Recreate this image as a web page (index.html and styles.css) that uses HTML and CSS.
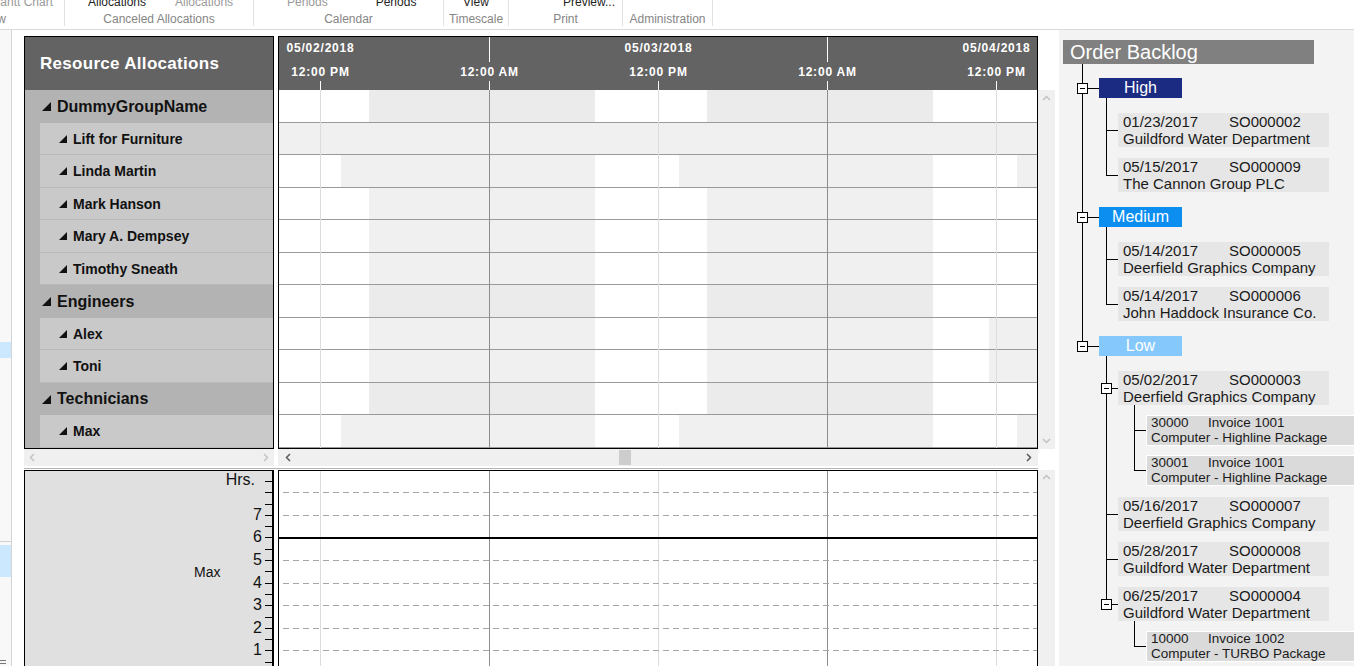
FILE: index.html
```html
<!DOCTYPE html>
<html>
  <head>
    <title>Resource Planning</title>
    <link rel="stylesheet" href="styles.css">
  </head>
  <body>
    <div class="ribbon">
      <div class="rgroup g1">
        <div class="rbtns"><span class="off">Gantt Chart</span></div>
        <div class="rlabel">View</div>
      </div>
      <div class="rgroup g2">
        <div class="rbtns"><span>Allocations</span><span class="off">Allocations</span></div>
        <div class="rlabel">Canceled Allocations</div>
      </div>
      <div class="rgroup g3">
        <div class="rbtns"><span class="off">Periods</span><span>Periods</span></div>
        <div class="rlabel">Calendar</div>
      </div>
      <div class="rgroup g4">
        <div class="rbtns"><span>View</span></div>
        <div class="rlabel">Timescale</div>
      </div>
      <div class="rgroup g5">
        <div class="rbtns"><span>Preview...</span></div>
        <div class="rlabel">Print</div>
      </div>
      <div class="rgroup g6">
        <div class="rbtns"></div>
        <div class="rlabel">Administration</div>
      </div>
    </div>

    <div class="work">
      <div class="nav">
        <div class="nav-sel"></div>
        <div class="nav-rule"></div>
        <div class="nav-sel tall"></div>
        <div class="nav-grip"><i></i><i></i></div>
      </div>

      <div class="plan">
        <div class="upper">
          <div class="restable">
            <div class="rhead">Resource Allocations</div>
            <div class="rbody">
              <div class="rrow grp"><svg class="tri" width="9" height="9" viewBox="0 0 9 9"><path d="M9 0V9H0Z"/></svg>DummyGroupName</div>
              <div class="rrow kid"><svg class="tri" width="8" height="8" viewBox="0 0 8 8"><path d="M8 0V8H0Z"/></svg>Lift for Furniture</div>
              <div class="rrow kid"><svg class="tri" width="8" height="8" viewBox="0 0 8 8"><path d="M8 0V8H0Z"/></svg>Linda Martin</div>
              <div class="rrow kid"><svg class="tri" width="8" height="8" viewBox="0 0 8 8"><path d="M8 0V8H0Z"/></svg>Mark Hanson</div>
              <div class="rrow kid"><svg class="tri" width="8" height="8" viewBox="0 0 8 8"><path d="M8 0V8H0Z"/></svg>Mary A. Dempsey</div>
              <div class="rrow kid"><svg class="tri" width="8" height="8" viewBox="0 0 8 8"><path d="M8 0V8H0Z"/></svg>Timothy Sneath</div>
              <div class="rrow grp"><svg class="tri" width="9" height="9" viewBox="0 0 9 9"><path d="M9 0V9H0Z"/></svg>Engineers</div>
              <div class="rrow kid"><svg class="tri" width="8" height="8" viewBox="0 0 8 8"><path d="M8 0V8H0Z"/></svg>Alex</div>
              <div class="rrow kid"><svg class="tri" width="8" height="8" viewBox="0 0 8 8"><path d="M8 0V8H0Z"/></svg>Toni</div>
              <div class="rrow grp"><svg class="tri" width="9" height="9" viewBox="0 0 9 9"><path d="M9 0V9H0Z"/></svg>Technicians</div>
              <div class="rrow kid"><svg class="tri" width="8" height="8" viewBox="0 0 8 8"><path d="M8 0V8H0Z"/></svg>Max</div>
            </div>
          </div>

          <div class="gantt">
            <div class="ghead">
              <div class="gdates">
                <div class="gdate">05/02/2018</div>
                <div class="gdate">05/03/2018</div>
                <div class="gdate">05/04/2018</div>
              </div>
              <div class="gtimes">
                <div class="gtime">12:00 PM</div>
                <div class="gtime">12:00 AM</div>
                <div class="gtime">12:00 PM</div>
                <div class="gtime">12:00 AM</div>
                <div class="gtime">12:00 PM</div>
              </div>
            </div>
            <div class="gbody">
              <!-- white = working time, grey = non-working time -->
              <div class="grow grp"><span style="width:90px"></span><span class="off" style="width:226px"></span><span style="width:112px"></span><span class="off" style="width:226px"></span><span></span></div>
              <div class="grow"><span class="off"></span></div>
              <div class="grow"><span style="width:62px"></span><span class="off" style="width:254px"></span><span style="width:84px"></span><span class="off" style="width:254px"></span><span style="width:84px"></span><span class="off"></span></div>
              <div class="grow"><span style="width:90px"></span><span class="off" style="width:226px"></span><span style="width:112px"></span><span class="off" style="width:226px"></span><span></span></div>
              <div class="grow"><span style="width:90px"></span><span class="off" style="width:226px"></span><span style="width:112px"></span><span class="off" style="width:226px"></span><span></span></div>
              <div class="grow"><span style="width:90px"></span><span class="off" style="width:226px"></span><span style="width:112px"></span><span class="off" style="width:226px"></span><span></span></div>
              <div class="grow grp"><span style="width:90px"></span><span class="off" style="width:226px"></span><span style="width:112px"></span><span class="off" style="width:226px"></span><span></span></div>
              <div class="grow"><span style="width:90px"></span><span class="off" style="width:226px"></span><span style="width:112px"></span><span class="off" style="width:226px"></span><span style="width:56px"></span><span class="off"></span></div>
              <div class="grow"><span style="width:90px"></span><span class="off" style="width:226px"></span><span style="width:112px"></span><span class="off" style="width:226px"></span><span style="width:56px"></span><span class="off"></span></div>
              <div class="grow grp"><span style="width:90px"></span><span class="off" style="width:226px"></span><span style="width:112px"></span><span class="off" style="width:226px"></span><span></span></div>
              <div class="grow"><span style="width:62px"></span><span class="off" style="width:254px"></span><span style="width:84px"></span><span class="off" style="width:254px"></span><span style="width:84px"></span><span class="off"></span></div>
              <div class="gridlines">
                <div class="vl" style="left:41px"></div>
                <div class="vl mid" style="left:210px"></div>
                <div class="vl" style="left:379px"></div>
                <div class="vl mid" style="left:548px"></div>
                <div class="vl" style="left:717px"></div>
              </div>
            </div>
          </div>

          <div class="vscroll">
            <svg width="9" height="6" viewBox="0 0 9 6"><polyline points="1,5 4.5,1.5 8,5"/></svg>
            <svg width="9" height="6" viewBox="0 0 9 6"><polyline points="1,1 4.5,4.5 8,1"/></svg>
          </div>
        </div>

        <div class="hrow">
          <div class="hscroll side">
            <svg width="6" height="9" viewBox="0 0 6 9"><polyline points="5,1 1.5,4.5 5,8"/></svg>
            <svg class="end" width="6" height="9" viewBox="0 0 6 9"><polyline points="1,1 4.5,4.5 1,8"/></svg>
          </div>
          <div class="hscroll main">
            <svg width="6" height="9" viewBox="0 0 6 9"><polyline points="5,1 1.5,4.5 5,8"/></svg>
            <div class="thumb"></div>
            <svg class="end" width="6" height="9" viewBox="0 0 6 9"><polyline points="1,1 4.5,4.5 1,8"/></svg>
          </div>
        </div>
        <div class="split"></div>

        <div class="lower">
          <div class="histaxis">
            <svg class="axis" width="248" height="200">
              <line x1="247.5" y1="0" x2="247.5" y2="200"/>
              <g class="ticks">
                <line x1="240" y1="10.5" x2="247" y2="10.5"/>
                <line x1="240" y1="21.5" x2="247" y2="21.5"/>
                <line x1="240" y1="33.5" x2="247" y2="33.5"/>
                <line x1="240" y1="44.5" x2="247" y2="44.5"/>
                <line x1="240" y1="55.5" x2="247" y2="55.5"/>
                <line x1="240" y1="66.5" x2="247" y2="66.5"/>
                <line x1="240" y1="78.5" x2="247" y2="78.5"/>
                <line x1="240" y1="89.5" x2="247" y2="89.5"/>
                <line x1="240" y1="100.5" x2="247" y2="100.5"/>
                <line x1="240" y1="112.5" x2="247" y2="112.5"/>
                <line x1="240" y1="123.5" x2="247" y2="123.5"/>
                <line x1="240" y1="134.5" x2="247" y2="134.5"/>
                <line x1="240" y1="146.5" x2="247" y2="146.5"/>
                <line x1="240" y1="157.5" x2="247" y2="157.5"/>
                <line x1="240" y1="168.5" x2="247" y2="168.5"/>
                <line x1="240" y1="179.5" x2="247" y2="179.5"/>
                <line x1="240" y1="191.5" x2="247" y2="191.5"/>
              </g>
              <text class="unit" x="230" y="14">Hrs.</text>
              <text class="num" x="237" y="49">7</text>
              <text class="num" x="237" y="71">6</text>
              <text class="num" x="237" y="94">5</text>
              <text class="num" x="237" y="117">4</text>
              <text class="num" x="237" y="139">3</text>
              <text class="num" x="237" y="162">2</text>
              <text class="num" x="237" y="184">1</text>
              <text class="res" x="169" y="105.5">Max</text>
            </svg>
          </div>
          <div class="histchart">
            <svg class="load" width="758" height="200">
              <line class="noon" x1="41.5" y1="0" x2="41.5" y2="200"/>
              <line class="midnight" x1="210.5" y1="0" x2="210.5" y2="200"/>
              <line class="noon" x1="379.5" y1="0" x2="379.5" y2="200"/>
              <line class="midnight" x1="548.5" y1="0" x2="548.5" y2="200"/>
              <line class="noon" x1="717.5" y1="0" x2="717.5" y2="200"/>
              <g class="hours">
                <line x1="4" y1="21.5" x2="758" y2="21.5"/>
                <line x1="4" y1="44.5" x2="758" y2="44.5"/>
                <line x1="4" y1="89.5" x2="758" y2="89.5"/>
                <line x1="4" y1="112.5" x2="758" y2="112.5"/>
                <line x1="4" y1="134.5" x2="758" y2="134.5"/>
                <line x1="4" y1="157.5" x2="758" y2="157.5"/>
                <line x1="4" y1="179.5" x2="758" y2="179.5"/>
              </g>
              <!-- capacity: 6 hrs -->
              <rect x="0" y="66" width="758" height="2"/>
            </svg>
          </div>
          <div class="vscroll hist">
            <svg width="9" height="6" viewBox="0 0 9 6"><polyline points="1,5 4.5,1.5 8,5"/></svg>
          </div>
        </div>
      </div>

      <div class="backlog">
        <div class="bl-title">Order Backlog</div>
        <div class="tree">
          <div class="prio">
            <div class="prio-head"><span class="exp"></span><span class="prio-label high">High</span></div>
            <div class="orders">
              <div class="order"><div class="card"><span class="dt">01/23/2017</span>SO000002<br>Guildford Water Department</div></div>
              <div class="order"><div class="card"><span class="dt">05/15/2017</span>SO000009<br>The Cannon Group PLC</div></div>
            </div>
          </div>
          <div class="prio">
            <div class="prio-head"><span class="exp"></span><span class="prio-label medium">Medium</span></div>
            <div class="orders">
              <div class="order"><div class="card"><span class="dt">05/14/2017</span>SO000005<br>Deerfield Graphics Company</div></div>
              <div class="order"><div class="card"><span class="dt">05/14/2017</span>SO000006<br>John Haddock Insurance Co.</div></div>
            </div>
          </div>
          <div class="prio">
            <div class="prio-head"><span class="exp"></span><span class="prio-label low">Low</span></div>
            <div class="orders">
              <div class="order">
                <div class="card"><span class="exp"></span><span class="dt">05/02/2017</span>SO000003<br>Deerfield Graphics Company</div>
                <div class="subs">
                  <div class="sub"><div class="subcard"><span class="num">30000</span>Invoice 1001<br>Computer - Highline Package</div></div>
                  <div class="sub"><div class="subcard"><span class="num">30001</span>Invoice 1001<br>Computer - Highline Package</div></div>
                </div>
              </div>
              <div class="order"><div class="card"><span class="dt">05/16/2017</span>SO000007<br>Deerfield Graphics Company</div></div>
              <div class="order"><div class="card"><span class="dt">05/28/2017</span>SO000008<br>Guildford Water Department</div></div>
              <div class="order">
                <div class="card"><span class="exp"></span><span class="dt">06/25/2017</span>SO000004<br>Guildford Water Department</div>
                <div class="subs">
                  <div class="sub"><div class="subcard"><span class="num">10000</span>Invoice 1002<br>Computer - TURBO Package</div></div>
                </div>
              </div>
            </div>
          </div>
        </div>
      </div>
    </div>
  </body>
</html>
```

FILE: styles.css
```css
*{
  box-sizing: border-box;
}

body{
  margin: 0;
  width: 1354px;
  height: 666px;
  overflow: hidden;
  background-color: white;
  color: #111;
  font-family: "Liberation Sans", Arial, Helvetica, sans-serif;
}

/* ribbon, scrolled so only the bottom of it shows */
.ribbon{
  display: flex;
  height: 30px;
  border-bottom: 1px solid #dadada;
  overflow: hidden;
  font-size: 12px;
}

.rgroup{
  display: flex;
  flex-direction: column;
  flex: none;
  height: 26px;
  border-right: 1px solid #e2e2e2;
}

.rbtns{
  display: flex;
  height: 17px;
  margin-top: -5px;
  line-height: 14px;
  color: #1e1e1e;
  white-space: nowrap;
}

.rbtns .off{
  color: #9a9a9a;
}

.rlabel{
  line-height: 14px;
  text-align: center;
  color: #858585;
  white-space: nowrap;
}

.g1{ width: 85px; margin-left: -20px; }
.g1 .rbtns{ padding-left: 11px; }
.g1 .rlabel{ text-align: left; }
.g2{ width: 189px; }
.g2 .rbtns{ padding-left: 23px; gap: 29px; }
.g3{ width: 190px; }
.g3 .rbtns{ padding-left: 33px; gap: 48px; }
.g4{ width: 65px; }
.g4 .rbtns{ padding-left: 19px; }
.g5{ width: 114px; }
.g5 .rbtns{ padding-left: 54px; }
.g6{ width: 90px; }

.work{
  display: flex;
  height: 636px;
}

/* collapsed navigation strip */
.nav{
  display: flex;
  flex-direction: column;
  flex: none;
  width: 12px;
  background-color: #f8f8f8;
  border-right: 1px solid #d4d4d4;
}

.nav-sel{
  height: 16px;
  margin-top: 312px;
  background-color: #cce8ff;
}

.nav-sel.tall{
  height: 32px;
  margin-top: 3px;
}

.nav-rule{
  height: 1px;
  margin-top: 183px;
  background-color: #d0d0d0;
}

.nav-grip{
  margin-top: auto;
  padding-bottom: 2px;
}

.nav-grip i{
  display: block;
  width: 6px;
  height: 1px;
  margin-top: 2px;
  background-color: #777;
}

.plan{
  display: flex;
  flex-direction: column;
  flex: none;
  width: 1031px;
  margin-left: 12px;
  padding-top: 6px;
}

.plan > *{
  flex: none;
}

.upper{
  display: flex;
  height: 413px;
}

/* resource list */
.restable{
  width: 250px;
  border: 1px solid #000;
  background-color: #b3b3b3;
}

.rhead{
  display: flex;
  align-items: center;
  height: 53px;
  padding-left: 15px;
  background-color: #636363;
  color: white;
  font-size: 17px;
  font-weight: bold;
  letter-spacing: 0.3px;
}

.rrow{
  display: flex;
  align-items: center;
  height: 33px;
  font-weight: bold;
  white-space: nowrap;
}

.rrow:nth-child(even){
  height: 32px;
}

.rrow.grp{
  padding-left: 17px;
  font-size: 16px;
  background-color: #b3b3b3;
}

.rrow.kid{
  margin-left: 15px;
  padding-left: 19px;
  font-size: 14px;
  background-color: #c9c9c9;
  border-bottom: 1px solid #b9b9b9;
}

.tri{
  flex: none;
  margin-right: 6px;
  fill: #111;
}

/* gantt timeline */
.gantt{
  width: 760px;
  margin-left: 4px;
  border: 1px solid #000;
}

.ghead{
  height: 53px;
  overflow: hidden;
  background-color: #636363;
  color: white;
  font-size: 12px;
  font-weight: bold;
  letter-spacing: 0.8px;
  white-space: nowrap;
}

.gdates{
  display: flex;
  height: 25px;
  margin-left: -127px;
}

.gdate{
  flex: none;
  width: 338px;
  border-right: 1px solid white;
  text-align: center;
  line-height: 23px;
}

.gtimes{
  display: flex;
  height: 28px;
  margin-left: -43px;
}

.gtime{
  position: relative;
  flex: none;
  width: 169px;
  text-align: center;
  line-height: 20px;
}

.gtime::after{
  content: "";
  position: absolute;
  left: 84px;
  bottom: 0;
  width: 1px;
  height: 9px;
  background-color: white;
}

.gbody{
  position: relative;
}

.grow{
  display: flex;
  height: 33px;
  border-bottom: 1px solid #9a9a9a;
}

.grow:nth-child(even){
  height: 32px;
}

.grow span{
  flex: none;
}

.grow span:last-child{
  flex: 1;
}

.grow .off{
  background-color: #f0f0f0;
}

.grow.grp .off{
  background-color: #ebebeb;
}

.gridlines{
  position: absolute;
  top: 0;
  left: 0;
  right: 0;
  bottom: 0;
  pointer-events: none;
}

.vl{
  position: absolute;
  top: 0;
  bottom: 0;
  width: 1px;
  background-color: #dcdcdc;
}

.vl.mid{
  background-color: #8e8e8e;
}

/* scroll bars */
.vscroll{
  display: flex;
  flex-direction: column;
  justify-content: space-between;
  align-items: center;
  flex: none;
  width: 17px;
  height: 359px;
  margin-top: 54px;
  padding: 5px 0;
  background-color: #f0f0f0;
}

.vscroll.hist{
  height: auto;
  margin-top: 0;
  justify-content: flex-start;
  padding-top: 4px;
}

.vscroll polyline{
  fill: none;
  stroke: #c2c2c2;
  stroke-width: 1.5;
}

.hrow{
  display: flex;
  height: 17px;
}

.hscroll{
  display: flex;
  align-items: center;
  background-color: #f0f0f0;
}

.hscroll.side{
  width: 250px;
  padding: 0 5px;
}

.hscroll.main{
  width: 760px;
  margin-left: 4px;
  padding: 0 6px 0 7px;
}

.hscroll .end{
  margin-left: auto;
}

.hscroll polyline{
  fill: none;
  stroke-width: 1.5;
}

.hscroll.side polyline{
  stroke: #c4c4c4;
}

.hscroll.main polyline{
  stroke: #5a5a5a;
}

.thumb{
  width: 12px;
  height: 15px;
  margin-left: 328px;
  background-color: #cdcdcd;
}

.split{
  width: 1014px;
  height: 1px;
  margin: 2px 0 1px;
  background-color: #b4b4b4;
}

/* load histogram */
.lower{
  display: flex;
  height: 200px;
}

.histaxis{
  width: 250px;
  border: 1px solid #000;
  background-color: #e0e0e0;
}

.histchart{
  width: 760px;
  margin-left: 4px;
  border: 1px solid #000;
  background-color: white;
}

.axis, .load{
  display: block;
}

.axis line{
  stroke: #000;
  stroke-width: 1;
}

.axis text{
  font-family: "Liberation Sans", Arial, sans-serif;
  fill: #111;
}

.axis .num, .axis .unit{
  font-size: 16px;
  text-anchor: end;
}

.axis .res{
  font-size: 14px;
}

.load .noon{
  stroke: #dcdcdc;
}

.load .midnight{
  stroke: #8e8e8e;
}

.load .hours line{
  stroke: #a6a6a6;
  stroke-dasharray: 6 4;
}

.load rect{
  fill: #000;
}

/* order backlog tree */
.backlog{
  flex: none;
  width: 295px;
  margin-left: 4px;
  padding: 10px 0 0 4px;
  overflow: hidden;
  background-color: #f3f3f3;
  color: #1a1a1a;
}

.bl-title{
  width: 251px;
  height: 24px;
  padding-left: 7px;
  background-color: #808080;
  color: white;
  font-size: 20px;
  line-height: 24px;
}

.tree{
  margin-left: 14px;
}

.prio{
  position: relative;
  margin-top: 15px;
}

.prio:first-child{
  margin-top: 14px;
}

.prio::before{
  content: "";
  position: absolute;
  left: 5px;
  top: -15px;
  bottom: 0;
  border-left: 1px solid #000;
}

.prio:first-child::before{
  top: -14px;
}

.prio:last-child::before{
  bottom: auto;
  height: 25px;
}

.prio-head{
  display: flex;
  align-items: center;
  height: 20px;
}

.exp{
  position: relative;
  z-index: 1;
  flex: none;
  width: 11px;
  height: 11px;
  border: 1px solid #000;
  background-color: white;
}

.exp::after{
  content: "";
  position: absolute;
  left: 2px;
  right: 2px;
  top: 4px;
  height: 1px;
  background-color: #000;
}

.prio-label{
  position: relative;
  width: 83px;
  height: 20px;
  margin-left: 11px;
  color: white;
  font-size: 16px;
  line-height: 20px;
  text-align: center;
}

.prio-label::before{
  content: "";
  position: absolute;
  left: -11px;
  top: 10px;
  width: 11px;
  height: 1px;
  background-color: #000;
}

.high{ background-color: #1c2b82; }
.medium{ background-color: #0c8ef0; }
.low{ background-color: #85c8fc; }

.orders{
  padding: 4px 0 0 41px;
}

.order{
  position: relative;
  margin-top: 11px;
}

.order::before{
  content: "";
  position: absolute;
  left: -12px;
  top: -15px;
  bottom: 0;
  border-left: 1px solid #000;
}

.order:last-child::before{
  bottom: auto;
  height: 32px;
}

.order::after{
  content: "";
  position: absolute;
  left: -12px;
  top: 17px;
  width: 12px;
  height: 1px;
  background-color: #000;
}

.card{
  position: relative;
  width: 211px;
  height: 34px;
  padding: 1px 0 0 5px;
  background-color: #e6e6e6;
  font-size: 15px;
  line-height: 16.5px;
  white-space: nowrap;
}

.card .exp{
  position: absolute;
  left: -17px;
  top: 12px;
}

.dt{
  display: inline-block;
  width: 106px;
}

.subs{
  padding: 1px 0 0 28px;
}

.sub{
  position: relative;
  margin-top: 9px;
}

.sub::before{
  content: "";
  position: absolute;
  left: -12px;
  top: -10px;
  bottom: 0;
  border-left: 1px solid #000;
}

.sub:last-child::before{
  bottom: auto;
  height: 25px;
}

.sub::after{
  content: "";
  position: absolute;
  left: -12px;
  top: 15px;
  width: 12px;
  height: 1px;
  background-color: #000;
}

.subcard{
  width: 215px;
  height: 31px;
  padding-left: 4px;
  border: 1px solid white;
  border-right: 0;
  background-color: #dadada;
  font-size: 13.5px;
  line-height: 14.5px;
  white-space: nowrap;
}

.subcard .num{
  display: inline-block;
  width: 57px;
}
```
